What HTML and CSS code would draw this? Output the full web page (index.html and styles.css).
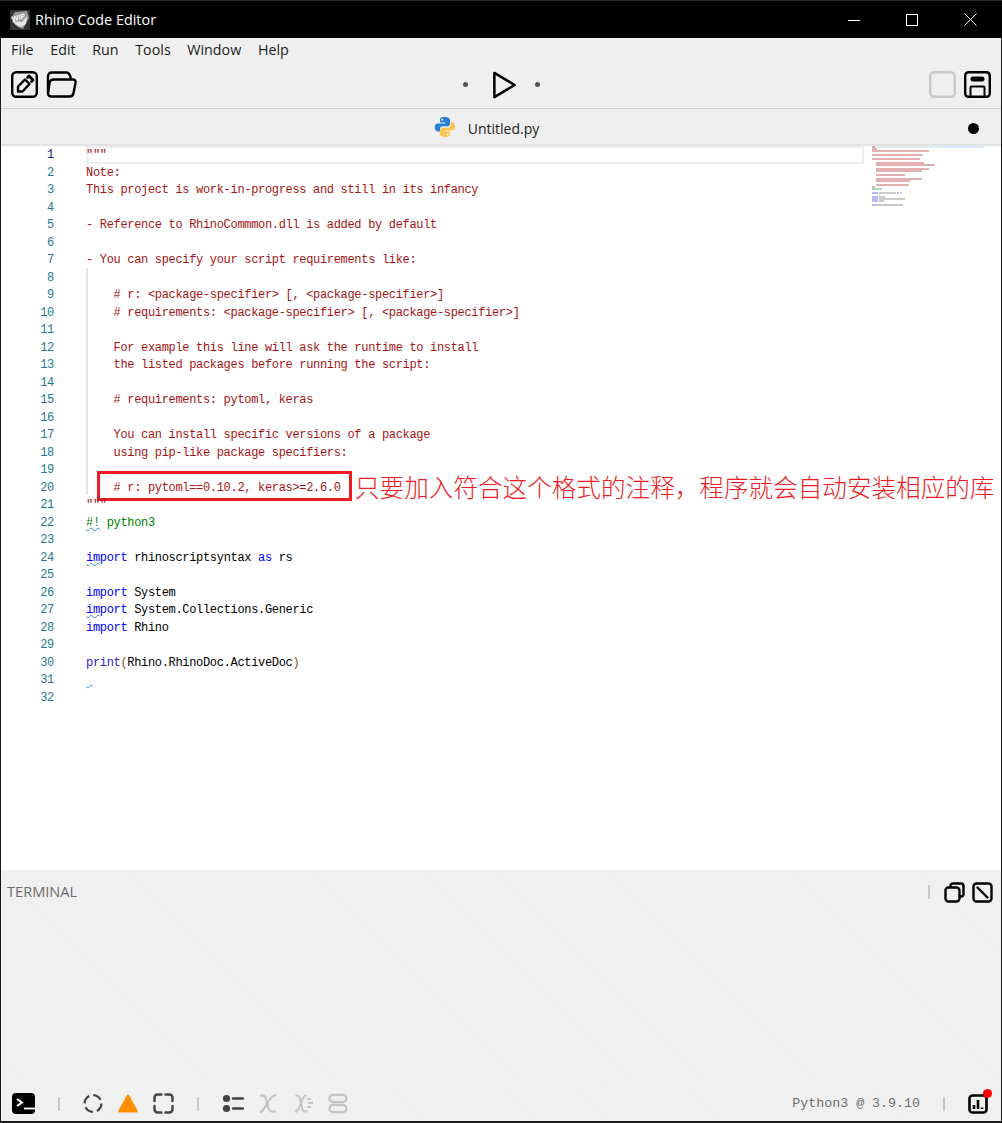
FILE: index.html
```html
<!DOCTYPE html>
<html lang="en">
<head>
<meta charset="utf-8">
<title>Rhino Code Editor</title>
<link rel="stylesheet" href="styles.css">
</head>
<body>
<div class="window">
  <header class="titlebar">
    <div class="title-left">
      <svg class="app-logo" viewBox="0 0 20 20"><rect width="20" height="20" fill="#333"/><path d="M1 8 5 2 17 1 19 8 16 13 13 19 8 17 4 13Z" fill="#9a9a9a"/><path d="M2 11 12 12 17 6 16 14 11 17 6 15Z" fill="#e6e6e6"/><text class="wip" x="2" y="9.500" transform="rotate(-14 10 8)">WIP</text></svg>
      <span>Rhino Code Editor</span>
    </div>
    <div class="win-controls">
      <button class="win-btn"><svg width="12" height="12" viewBox="0 0 12 12"><path d="M0 6.500H12" stroke="#fff"/></svg></button>
      <button class="win-btn"><svg width="12" height="12" viewBox="0 0 12 12"><rect x=".5" y=".5" width="11" height="11" fill="none" stroke="#fff"/></svg></button>
      <button class="win-btn"><svg width="13" height="13" viewBox="0 0 13 13"><path d="M.5.5 12.500 12.500M12.500.5.5 12.500" stroke="#fff" fill="none"/></svg></button>
    </div>
  </header>

  <nav class="menubar">
    <span>File</span><span>Edit</span><span>Run</span><span>Tools</span><span>Window</span><span>Help</span>
  </nav>

  <div class="toolbar">
    <div class="tool-group">
      <svg class="icon-27" viewBox="0 0 27 27" fill="none" stroke="#000" stroke-width="2.400" stroke-linejoin="round" stroke-linecap="round"><rect x="1.200" y="1.200" width="24.600" height="24.600" rx="4"/><path d="M7 20.500V15.500L14 8.500 18.500 13 11.500 20.500Z"/><path d="M16.500 6.500 18 5 22 9 20.500 10.500" stroke-width="2.800"/></svg>
      <svg class="icon-folder" viewBox="0 0 31 27" fill="none" stroke="#000" stroke-width="2.400" stroke-linejoin="round"><path d="M2 22V5.500Q2 1.500 6 1.500H20.500Q24 1.500 25 8.500"/><path d="M2 22 3.500 12Q4 8.500 8 8.500H27Q30 8.500 29.500 12L27.500 22Q27 25.500 23.500 25.500H5.500Q2 25.500 2 22Z"/></svg>
    </div>
    <div class="tool-center">
      <i class="dot"></i>
      <svg class="icon-play" viewBox="0 0 25 29" fill="none" stroke="#000" stroke-width="2.600" stroke-linejoin="round"><path d="M2 2 23 14.500 2 27Z"/></svg>
      <i class="dot"></i>
    </div>
    <div class="tool-group tool-right">
      <svg class="icon-27" viewBox="0 0 27 27" fill="none" stroke="#c8c8c8" stroke-width="2.400"><rect x="1.200" y="1.200" width="24.600" height="24.600" rx="4"/></svg>
      <svg class="icon-27" viewBox="0 0 27 27" fill="none" stroke="#000" stroke-width="2.400" stroke-linejoin="round"><path d="M5 1.200H22Q25.800 1.200 25.800 5V22Q25.800 25.800 22 25.800H5Q1.200 25.800 1.200 22V5Q1.200 1.200 5 1.200Z"/><rect x="7" y="6" width="13" height="4" rx="1.500" fill="#000" stroke-width="1"/><path d="M6.500 25V16.500Q6.500 15.500 7.500 15.500H19.500Q20.500 15.500 20.500 16.500V25" stroke-width="2"/></svg>
    </div>
  </div>

  <div class="tabbar">
    <div class="tab">
      <svg class="py-logo" viewBox="0 0 22 22"><path d="M10.800 1C6.500 1 6 2.700 6 4.200V6.500H11V7.500H3.800C2 7.500.8 9 .8 11.300S2 15.500 3.800 15.500H6V12.800C6 11 7.500 10.300 9 10.300H13.500C15 10.300 16 9.300 16 7.800V4.200C16 2.500 14.500 1 10.800 1Z" fill="#2b7fd0"/><path d="M11.200 21C15.500 21 16 19.300 16 17.800V15.500H11V14.500H18.200C20 14.500 21.200 13 21.200 10.700S20 6.500 18.200 6.500H16.500V9.200C16.500 11 15 11.700 13.500 11.700H9C7.500 11.700 6 12.700 6 14.200V17.800C6 19.500 7.500 21 11.200 21Z" fill="#fdc44f"/><circle cx="8.300" cy="3.700" r=".9" fill="#fff"/><circle cx="13.700" cy="18.300" r=".9" fill="#fff"/></svg>
      <span>Untitled.py</span>
    </div>
    <i class="tab-dirty"></i>
  </div>

  <main class="editor">
    <div class="guide"></div>
    <div class="code-area">
      <div class="line current"><span class="num">1</span><span class="code str">"""</span></div>
      <div class="line"><span class="num">2</span><span class="code str">Note:</span></div>
      <div class="line"><span class="num">3</span><span class="code str">This project is work-in-progress and still in its infancy</span></div>
      <div class="line"><span class="num">4</span><span class="code"></span></div>
      <div class="line"><span class="num">5</span><span class="code str">- Reference to RhinoCommmon.dll is added by default</span></div>
      <div class="line"><span class="num">6</span><span class="code"></span></div>
      <div class="line"><span class="num">7</span><span class="code str">- You can specify your script requirements like:</span></div>
      <div class="line"><span class="num">8</span><span class="code"></span></div>
      <div class="line"><span class="num">9</span><span class="code str">    # r: &lt;package-specifier&gt; [, &lt;package-specifier&gt;]</span></div>
      <div class="line"><span class="num">10</span><span class="code str">    # requirements: &lt;package-specifier&gt; [, &lt;package-specifier&gt;]</span></div>
      <div class="line"><span class="num">11</span><span class="code"></span></div>
      <div class="line"><span class="num">12</span><span class="code str">    For example this line will ask the runtime to install</span></div>
      <div class="line"><span class="num">13</span><span class="code str">    the listed packages before running the script:</span></div>
      <div class="line"><span class="num">14</span><span class="code"></span></div>
      <div class="line"><span class="num">15</span><span class="code str">    # requirements: pytoml, keras</span></div>
      <div class="line"><span class="num">16</span><span class="code"></span></div>
      <div class="line"><span class="num">17</span><span class="code str">    You can install specific versions of a package</span></div>
      <div class="line"><span class="num">18</span><span class="code str">    using pip-like package specifiers:</span></div>
      <div class="line"><span class="num">19</span><span class="code"></span></div>
      <div class="line annotated"><span class="num">20</span><span class="code str">    # r: pytoml==0.10.2, keras&gt;=2.6.0</span>
        <div class="mark-box"></div>
        <div class="mark-note">只要加入符合这个格式的注释，程序就会自动安装相应的库</div>
      </div>
      <div class="line"><span class="num">21</span><span class="code str">"""</span></div>
      <div class="line"><span class="num">22</span><span class="code cmt"><span class="squig">#!</span> python3</span></div>
      <div class="line"><span class="num">23</span><span class="code"></span></div>
      <div class="line"><span class="num">24</span><span class="code"><span class="kw"><span class="squig">im</span>port</span> rhinoscriptsyntax <span class="kw">as</span> rs</span></div>
      <div class="line"><span class="num">25</span><span class="code"></span></div>
      <div class="line"><span class="num">26</span><span class="code"><span class="kw">import</span> System</span></div>
      <div class="line"><span class="num">27</span><span class="code"><span class="kw"><span class="squig">im</span>port</span> System.Collections.Generic</span></div>
      <div class="line"><span class="num">28</span><span class="code"><span class="kw">import</span> Rhino</span></div>
      <div class="line"><span class="num">29</span><span class="code"></span></div>
      <div class="line"><span class="num">30</span><span class="code"><span class="fn">print</span><span class="paren">(</span>Rhino.RhinoDoc.ActiveDoc<span class="paren">)</span></span></div>
      <div class="line"><span class="num">31</span><span class="code"><span class="squig squig-empty">&nbsp;</span></span></div>
      <div class="line"><span class="num">32</span><span class="code"></span></div>
    </div>
    <svg class="minimap" viewBox="0 0 112 62" width="112" height="62">
      <rect x="0" y="0" width="112" height="2" fill="#dcecfb"/>
      <g fill="#d88e8e">
        <rect y="0.300" width="3" height="1.400"/><rect y="2.300" width="5" height="1.400"/><rect y="4.300" width="57" height="1.400"/>
        <rect y="8.300" width="51" height="1.400"/><rect y="12.300" width="48" height="1.400"/>
        <rect x="4" y="16.300" width="48" height="1.400"/><rect x="4" y="18.300" width="59" height="1.400"/>
        <rect x="4" y="22.300" width="53" height="1.400"/><rect x="4" y="24.300" width="46" height="1.400"/>
        <rect x="4" y="28.300" width="29" height="1.400"/><rect x="4" y="32.300" width="46" height="1.400"/>
        <rect x="4" y="34.300" width="34" height="1.400"/><rect x="4" y="38.300" width="33" height="1.400"/>
        <rect y="40.300" width="3" height="1.400"/>
      </g>
      <rect y="42.300" width="10" height="1.400" fill="#8ccb8c"/>
      <g fill="#9c9cf0">
        <rect y="46.300" width="6" height="1.400"/><rect x="25" y="46.300" width="2" height="1.400"/>
        <rect y="50.300" width="6" height="1.400"/><rect y="52.300" width="6" height="1.400"/><rect y="54.300" width="6" height="1.400"/>
        <rect y="58.300" width="5" height="1.400"/>
      </g>
      <g fill="#b4b4b4">
        <rect x="7" y="46.300" width="17" height="1.400"/><rect x="28" y="46.300" width="2" height="1.400"/>
        <rect x="7" y="50.300" width="6" height="1.400"/><rect x="7" y="52.300" width="26" height="1.400"/><rect x="7" y="54.300" width="5" height="1.400"/>
        <rect x="5" y="58.300" width="26" height="1.400"/>
      </g>
    </svg>
  </main>

  <section class="terminal">
    <div class="terminal-head">
      <span class="terminal-label">TERMINAL</span>
      <div class="terminal-tools">
        <i class="sep"></i>
        <svg class="icon-21" viewBox="0 0 21 21" fill="none" stroke="#000" stroke-width="2.400" stroke-linejoin="round"><path d="M6.500 5.500V4Q6.500 1.500 9 1.500H17Q19.500 1.500 19.500 4V12Q19.500 14.500 17 14.500H15.500"/><rect x="1.500" y="5.500" width="14" height="14" rx="3"/></svg>
        <svg class="icon-21" viewBox="0 0 21 21" fill="none" stroke="#000" stroke-width="2.400" stroke-linecap="round"><rect x="1.500" y="1.500" width="18" height="18" rx="3"/><path d="M5.500 5.500 15.500 15.500"/></svg>
      </div>
    </div>
  </section>

  <footer class="statusbar">
    <div class="status-left">
      <svg class="icon-w23" viewBox="0 0 23 21"><rect width="23" height="21" rx="4" fill="#000"/><path d="M5 6 10 9.500 5 13" fill="none" stroke="#fff" stroke-width="2"/><path d="M12 15.500H23" stroke="#fff" stroke-width="1.800"/></svg>
      <i class="sep"></i>
      <svg class="icon-w20" viewBox="0 0 21 21" fill="none" stroke="#444" stroke-width="2.400"><circle cx="10.500" cy="10.500" r="8.800" stroke-dasharray="9.500 4.300"/></svg>
      <svg class="icon-w20" viewBox="0 0 22 22"><path d="M11 2.500 20.500 19.500H1.500Z" fill="#ff9000" stroke="#ff9000" stroke-width="2.600" stroke-linejoin="round"/></svg>
      <svg class="icon-w21" viewBox="0 0 21 21" fill="none" stroke="#444" stroke-width="2.400" stroke-linecap="round"><path d="M1.500 8V5Q1.500 1.500 5 1.500H8.500M12.500 1.500H16Q19.500 1.500 19.500 5V8M19.500 13V16Q19.500 19.500 16 19.500H12.500M8.500 19.500H5Q1.500 19.500 1.500 16V13"/></svg>
      <i class="sep"></i>
      <svg class="icon-w22" viewBox="0 0 22 21"><circle cx="4.500" cy="5.500" r="3.600" fill="#444"/><circle cx="4.500" cy="15.500" r="3.600" fill="#444"/><path d="M11 5.500H21M11 15.500H21" stroke="#444" stroke-width="2.400" stroke-linecap="round"/></svg>
      <svg class="icon-w21" viewBox="0 0 21 21" fill="none" stroke="#c4c4c4" stroke-width="2.200"><path d="M1.500 3Q5.500 1 7 6L9.500 15Q11 20 16.500 18"/><path d="M17.500 2Q12 3 8.500 10T1 19.500"/></svg>
      <svg class="icon-w18" viewBox="0 0 18 21" fill="none" stroke="#c4c4c4" stroke-width="2"><path d="M.5 3Q4 1 5 6L7 15Q8 20 12 18"/><path d="M11 2Q8 4 6 10T.5 19.500"/><path d="M12 6H16M13 10H18M12 14H16"/></svg>
      <svg class="icon-w20" viewBox="0 0 21 21" fill="none" stroke="#c4c4c4" stroke-width="2.400"><rect x="1.500" y="1.500" width="18" height="7.500" rx="3.700"/><rect x="1.500" y="12" width="18" height="7.500" rx="3.700"/></svg>
    </div>
    <div class="status-right">
      <span class="runtime">Python3 @ 3.9.10</span>
      <i class="sep"></i>
      <div class="stats">
        <svg class="icon-stat" viewBox="0 0 20 20" fill="none" stroke="#000" stroke-width="2.600"><rect x="1.500" y="1.500" width="17" height="17" rx="3"/><path d="M6 15V11M10 15V6M14 15V13.500"/></svg>
        <i class="badge"></i>
      </div>
    </div>
  </footer>
</div>
</body>
</html>
```

FILE: styles.css
```css
* { box-sizing: border-box; }
html, body { margin: 0; padding: 0; background: #fff; }
body { font-family: "Open Sans", "Noto Sans", sans-serif; color: #1c1c1c; }
svg { display: block; flex: none; }
i { display: block; }

.window {
  width: 1002px;
  height: 1123px;
  display: flex;
  flex-direction: column;
  border-left: 1px solid #1a1a1a;
  border-right: 1px solid #1a1a1a;
  border-bottom: 2px solid #1a1a1a;
}

.titlebar {
  height: 38px;
  margin: 0 -1px;
  padding-left: 10px;
  background: #000;
  border-top: 1px solid #2a2a2a;
  color: #fff;
  display: flex;
  align-items: center;
  justify-content: space-between;
  flex: none;
}
.title-left { display: flex; align-items: center; gap: 5px; font-size: 14.400px; }
.app-logo { width: 20px; height: 20px; }
.wip { font: bold 7px "Liberation Sans", sans-serif; fill: #fff; }
.win-controls { display: flex; padding-right: 2px; }
.win-btn {
  width: 58.500px;
  height: 37px;
  padding: 0;
  border: 0;
  background: none;
  display: flex;
  align-items: center;
  justify-content: center;
}

.menubar {
  height: 23px;
  padding: 0 0 1px 10px;
  background: #efefef;
  display: flex;
  align-items: center;
  gap: 16.600px;
  font-size: 14.300px;
  flex: none;
}

.toolbar {
  height: 48px;
  padding: 9px 10px;
  background: #efefef;
  border-bottom: 1px solid #cfcfcf;
  display: grid;
  grid-template-columns: 1fr auto 1fr;
  align-items: center;
  flex: none;
}
.tool-group { display: flex; align-items: center; gap: 8px; }
.tool-right { justify-content: flex-end; gap: 8px; }
.tool-center { display: flex; align-items: center; gap: 21px; }
.dot { width: 5px; height: 5px; border-radius: 50%; background: #555; }
.icon-27 { width: 27px; height: 27px; }
.icon-folder { width: 31px; height: 27px; }
.icon-play { width: 25px; height: 28px; margin: 0 -3px 0 3px; }

.tabbar {
  height: 37px;
  padding: 3px 22px 0 0;
  background: #efefef;
  border-bottom: 2px solid #e2e2e2;
  display: grid;
  grid-template-columns: 1fr auto 1fr;
  align-items: center;
  flex: none;
}
.tab { grid-column: 2; display: flex; align-items: center; gap: 12px; font-size: 14px; margin-right: 7px; }
.py-logo { width: 22px; height: 22px; margin-top: -3px; }
.tab-dirty { grid-column: 3; justify-self: end; width: 11px; height: 11px; border-radius: 50%; background: #000; }

.editor {
  flex: 1;
  min-height: 0;
  background: #fff;
  position: relative;
  display: flex;
  font-family: "Liberation Mono", monospace;
  font-size: 12px;
  letter-spacing: -0.320px;
}
.code-area { width: 863px; flex: none; }
.guide {
  position: absolute;
  left: 85px;
  top: 122px;
  width: 2px;
  height: 227px;
  background: #e4e4e4;
}
.line { height: 17.500px; display: flex; line-height: 17.500px; position: relative; }
.num { width: 53px; flex: none; padding-top: 1px; text-align: right; color: #237893; }
.code { margin-left: 32px; flex: 1; padding-top: 1px; white-space: pre; color: #000; position: relative; }
.current .num { color: #0b216f; }
.current .code { box-shadow: inset 0 0 0 2px #eeeeee; }
.str { color: #a31515; }
.cmt { color: #008000; }
.kw { color: #0000ff; }
.fn { color: #2a1ccc; }
.paren { color: #795e26; }
.squig {
  text-decoration: underline wavy #3a86e0 1.100px;
  text-underline-offset: 1px;
}
.squig-empty { display: inline-block; }

.mark-box {
  position: absolute;
  left: 96px;
  top: -7.500px;
  width: 255px;
  height: 30px;
  border: 3px solid #ed1c24;
}
.mark-note {
  position: absolute;
  left: 354px;
  top: -6px;
  line-height: 26px;
  white-space: nowrap;
  font-family: "Noto Sans CJK SC", sans-serif;
  font-size: 24.600px;
  font-weight: 300;
  letter-spacing: 0;
  color: #ed1c24;
}

.minimap { margin: 0 0 0 8px; }

.terminal {
  height: 214px;
  padding: 12px 8px 0 6px;
  background: repeating-linear-gradient(45deg, #f0f0f0 0 9px, #eeeeee 9px 10px);
  flex: none;
}
.terminal-head { display: flex; align-items: center; justify-content: space-between; height: 20px; }
.terminal-label { font-size: 14.600px; color: #6b6b6b; margin-bottom: 3px; }
.terminal-tools { display: flex; align-items: center; gap: 7px; }
.terminal-tools .sep { margin-right: 7px; }
.icon-21 { width: 21px; height: 21px; }
.sep { width: 2px; height: 14px; background: #c8c8c8; }

.statusbar {
  height: 37px;
  padding: 2px 13px 0 11px;
  background: repeating-linear-gradient(45deg, #f0f0f0 0 9px, #eeeeee 9px 10px);
  display: flex;
  align-items: center;
  justify-content: space-between;
  flex: none;
}
.status-left { display: flex; align-items: center; gap: 15px; }
.status-left .sep { margin: 0 8px; }
.icon-w18 { width: 18px; height: 21px; }
.icon-w20 { width: 20px; height: 21px; }
.icon-w21 { width: 21px; height: 21px; }
.icon-w22 { width: 22px; height: 21px; }
.icon-w23 { width: 23px; height: 21px; }
.status-right { display: flex; align-items: center; }
.runtime { font-family: "Liberation Mono", monospace; font-size: 13.300px; color: #6e6e6e; }
.status-right .sep { margin: 0 23px 0 23px; }
.stats { position: relative; }
.icon-stat { width: 20px; height: 20px; }
.badge {
  position: absolute;
  top: -5px;
  right: -4px;
  width: 9px;
  height: 9px;
  border-radius: 50%;
  background: #f00;
}
```
